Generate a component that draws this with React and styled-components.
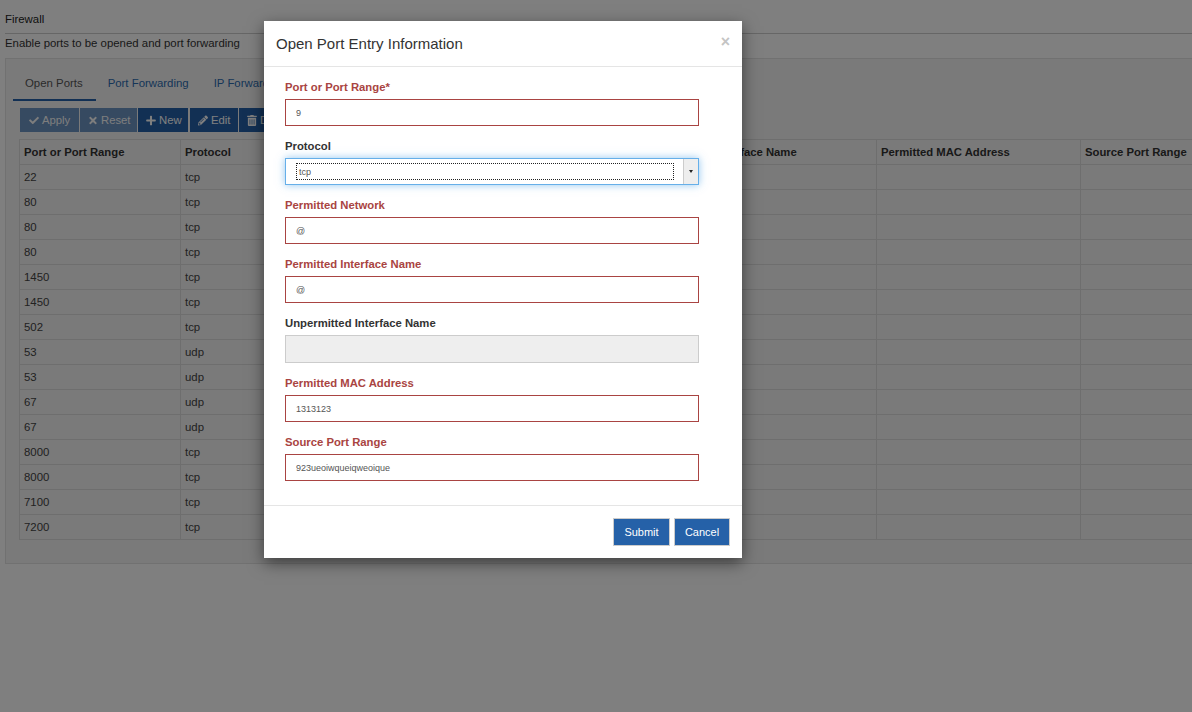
import React from "react";
import styled, { createGlobalStyle } from "styled-components";
import { FaCheck, FaTimes, FaPlus, FaPencilAlt, FaTrashAlt } from "react-icons/fa";

const Global = createGlobalStyle`
  html, body { margin: 0; padding: 0; background: #fff; }
  body { font-family: "Liberation Sans", Arial, sans-serif; color: #333; }
`;
const Page = styled.div`
  position: relative; width: 1192px; height: 712px; overflow: hidden; box-sizing: border-box;
  padding: 12px 0 0 5px; font-size: 12px;
`;
const Title = styled.div`
  font-size: 11.4px; line-height: 14px; color: #222; padding-bottom: 7px; border-bottom: 1px solid #ccc;
`;
const Desc = styled.div`
  font-size: 11.4px; line-height: 14px; margin: 2px 0 8px; color: #333;
`;
const Panel = styled.div`
  width: 1300px; height: 506px; box-sizing: border-box; background: #f5f5f5; border: 1px solid #e3e3e3;
  padding: 7px 0 0 7px;
`;
const Tabs = styled.div`display: flex; height: 35px; align-items: stretch;`;
const Tab = styled.div`
  padding: 10px 13px 0 12px; line-height: 14px; font-size: 11.4px; box-sizing: border-box;
  color: ${p => (p.$active ? "#555" : "#2c6cb0")};
  border-bottom: 2px solid ${p => (p.$active ? "#2561a8" : "transparent")};
`;
const Toolbar = styled.div`display: flex; gap: 1px; margin: 7px 0 7px 7px; height: 24px;`;
const ToolButton = styled.div`
  display: flex; align-items: center; gap: 3px; box-sizing: border-box; height: 24px;
  width: ${p => p.$w}px; padding-left: ${p => p.$pl || 8}px; font-size: 11.3px; color: #fff;
  background: #2561a8; white-space: nowrap;
  margin-right: ${p => p.$mr || 0}px;
  opacity: ${p => (p.$off ? 0.65 : 1)};
  svg { width: 10px; height: 11px; flex: none; }
`;
const Table = styled.table`
  border-collapse: collapse; table-layout: fixed; width: 1280px; margin-left: 6px; font-size: 12px;
  th, td { border: 1px solid #ddd; height: 25px; box-sizing: border-box; padding: 0 4px; text-align: left; overflow: hidden; white-space: nowrap; }
  th { font-weight: 700; color: #333; font-size: 11.3px; }
  td { color: #444; font-size: 11.4px; padding-bottom: 1px; }
`;
const Backdrop = styled.div`position: absolute; inset: 0; background: rgba(0,0,0,.5);`;
const Modal = styled.div`
  position: absolute; left: 264px; top: 21px; width: 478px; height: 537px; background: #fff;
  box-shadow: 0 5px 15px rgba(0,0,0,.5); display: flex; flex-direction: column;
`;
const ModalHeader = styled.div`
  display: flex; justify-content: space-between; align-items: flex-start; height: 46px; box-sizing: border-box;
  padding: 14px 12px 0 12px; border-bottom: 1px solid #e5e5e5;
`;
const ModalTitle = styled.div`font-size: 15px; line-height: 18px; color: #333;`;
const Close = styled.div`font-size: 16px; font-weight: 700; line-height: 14px; color: #c4c4c4;`;
const ModalBody = styled.div`padding: 13px 43px 0 21px; flex: 1;`;
const Field = styled.div`margin-bottom: 13px;`;
const Label = styled.div`
  font-size: 11.3px; font-weight: 700; line-height: 14px; height: 19px;
  color: ${p => (p.$error ? "#a94442" : "#333")};
`;
const Input = styled.input`
  display: block; width: 414px; height: ${p => (p.disabled ? 28 : 27)}px; box-sizing: border-box; padding: 0 10px; outline: none; border-radius: 0;
  font: 9px "Liberation Sans", Arial, sans-serif; color: #555;
  background: ${p => (p.disabled ? "#eee" : "#fff")};
  border: 1px solid ${p => (p.$error ? "#a94442" : "#ccc")};
`;
const SelectBox = styled.div`
  display: flex; align-items: center; width: 414px; height: 27px; box-sizing: border-box; background: #fff;
  border: 1px solid #66afe9; box-shadow: 0 0 8px rgba(102,175,233,.7);
`;
const SelectText = styled.div`
  flex: none; width: 378px; height: 17px; margin-left: 10px; box-sizing: border-box; padding-left: 2px;
  border: 1px dotted #222; font-size: 9px; line-height: 16px; color: #555;
`;
const SelectArrow = styled.div`
  margin-left: auto; width: 15px; height: 100%; display: flex; align-items: center; justify-content: center;
  background: #eee; border-left: 1px solid #ccc; box-sizing: border-box;
  &::after { content: ""; border: 2.5px solid transparent; border-top: 3px solid #222; border-bottom: 0; }
`;
const ModalFooter = styled.div`
  display: flex; justify-content: flex-end; gap: 4px; height: 53px; box-sizing: border-box;
  padding: 12px 12px 0 0; border-top: 1px solid #e5e5e5;
`;
const FootButton = styled.div`
  width: ${p => p.$w}px; height: 28px; box-sizing: border-box; display: flex; align-items: center; justify-content: center;
  background: #2561a8; border: 1px solid #ccc; color: #fff; font-size: 11px;
`;

const rows = [["22","tcp"],["80","tcp"],["80","tcp"],["80","tcp"],["1450","tcp"],["1450","tcp"],["502","tcp"],["53","udp"],["53","udp"],["67","udp"],["67","udp"],["8000","tcp"],["8000","tcp"],["7100","tcp"],["7200","tcp"]];
const widths = [161, 120, 140, 201, 235, 204, 219];
const heads = ["Port or Port Range","Protocol","Permitted Network","Permitted Interface Name","Unpermitted Interface Name","Permitted MAC Address","Source Port Range"];
const fields = [
  { label: "Port or Port Range*", value: "9", error: true },
  { label: "Protocol", select: true },
  { label: "Permitted Network", value: "@", error: true },
  { label: "Permitted Interface Name", value: "@", error: true },
  { label: "Unpermitted Interface Name", value: "", disabled: true },
  { label: "Permitted MAC Address", value: "1313123", error: true },
  { label: "Source Port Range", value: "923ueoiwqueiqweoique", error: true },
];

export default function App() {
  return (
    <Page>
      <Global />
      <Title>Firewall</Title>
      <Desc>Enable ports to be opened and port forwarding</Desc>
      <Panel>
        <Tabs>
          <Tab $active>Open Ports</Tab>
          <Tab>Port Forwarding</Tab>
          <Tab>IP Forwarding</Tab>
        </Tabs>
        <Toolbar>
          <ToolButton $w={59} $off $pl={9}><FaCheck />Apply</ToolButton>
          <ToolButton $w={57} $off><FaTimes />Reset</ToolButton>
          <ToolButton $w={50} $mr={1}><FaPlus />New</ToolButton>
          <ToolButton $w={48}><FaPencilAlt />Edit</ToolButton>
          <ToolButton $w={60}><FaTrashAlt />Delete</ToolButton>
        </Toolbar>
        <Table>
          <colgroup>{widths.map((w, i) => <col key={i} style={{ width: w }} />)}</colgroup>
          <thead><tr>{heads.map(h => <th key={h}>{h}</th>)}</tr></thead>
          <tbody>
            {rows.map((r, i) => (
              <tr key={i}><td>{r[0]}</td><td>{r[1]}</td><td /><td /><td /><td /><td /></tr>
            ))}
          </tbody>
        </Table>
      </Panel>
      <Backdrop />
      <Modal>
        <ModalHeader>
          <ModalTitle>Open Port Entry Information</ModalTitle>
          <Close>×</Close>
        </ModalHeader>
        <ModalBody>
          {fields.map(f => (
            <Field key={f.label}>
              <Label $error={f.error}>{f.label}</Label>
              {f.select ? (
                <SelectBox><SelectText>tcp</SelectText><SelectArrow /></SelectBox>
              ) : (
                <Input readOnly value={f.value} disabled={f.disabled} $error={f.error} />
              )}
            </Field>
          ))}
        </ModalBody>
        <ModalFooter>
          <FootButton $w={57}>Submit</FootButton>
          <FootButton $w={56}>Cancel</FootButton>
        </ModalFooter>
      </Modal>
    </Page>
  );
}
